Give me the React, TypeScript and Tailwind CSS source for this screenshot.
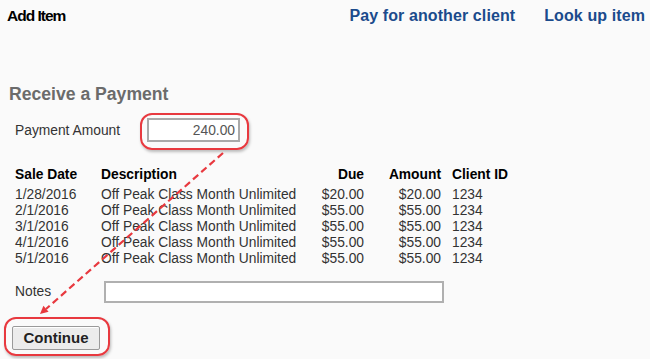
import React from "react";

type Sale = {
  date: string;
  description: string;
  due: string;
  amount: string;
  clientId: string;
};

const sales: Sale[] = [
  { date: "1/28/2016", description: "Off Peak Class Month Unlimited", due: "$20.00", amount: "$20.00", clientId: "1234" },
  { date: "2/1/2016", description: "Off Peak Class Month Unlimited", due: "$55.00", amount: "$55.00", clientId: "1234" },
  { date: "3/1/2016", description: "Off Peak Class Month Unlimited", due: "$55.00", amount: "$55.00", clientId: "1234" },
  { date: "4/1/2016", description: "Off Peak Class Month Unlimited", due: "$55.00", amount: "$55.00", clientId: "1234" },
  { date: "5/1/2016", description: "Off Peak Class Month Unlimited", due: "$55.00", amount: "$55.00", clientId: "1234" },
];

function App() {
  return (
    <div className="relative h-[359px] w-[650px] overflow-hidden bg-[#fafafa] font-['Liberation_Sans',Arial,sans-serif] text-[#333]">

      {/* top bar */}
      <div className="flex h-[32px] items-center pl-[7px] pr-[5px]">
        <div className="text-[15.5px] font-bold tracking-[-1px] text-black">
          Add Item
        </div>
        <div className="ml-auto flex gap-[29px] text-[16px] font-bold tracking-[0.1px] text-[#1b4b8c]">
          <a className="cursor-pointer">Pay for another client</a>
          <a className="cursor-pointer">Look up item</a>
        </div>
      </div>

      <h2 className="ml-[9px] mt-[52px] text-[17.6px] leading-[20px] font-bold text-[#6b6b6b]">
        Receive a Payment
      </h2>

      {/* payment amount */}
      <div className="mt-[9px] flex items-center">
        <div className="ml-[15px] w-[125px] text-[13.8px]">Payment Amount</div>
        <div className="rounded-[12px] border-2 border-[#e8393f] pb-[6px] pl-[5px] pr-[7px] pt-[3px] shadow-[1px_2px_3px_rgba(0,0,0,0.25)]">
          <input
            readOnly
            value="240.00"
            className="block h-[24px] w-[93px] border-2 border-[#a9a9a9] bg-white px-[3px] text-right text-[13.8px] text-[#555] outline-none"
          />
        </div>
      </div>

      {/* sales table */}
      <div className="mt-[17px] ml-[15px] grid grid-cols-[86px_199px_64px_77px_auto] text-[13.8px] leading-[16px]">
        <div className="pb-[4px] font-bold text-black">Sale Date</div>
        <div className="pb-[4px] font-bold text-black">Description</div>
        <div className="pb-[4px] text-right font-bold text-black">Due</div>
        <div className="pb-[4px] text-right font-bold text-black">Amount</div>
        <div className="pb-[4px] pl-[11px] font-bold text-black">Client ID</div>
        {sales.map((sale, index) => (
          <React.Fragment key={index}>
            <div>{sale.date}</div>
            <div>{sale.description}</div>
            <div className="text-right">{sale.due}</div>
            <div className="text-right">{sale.amount}</div>
            <div className="pl-[11px]">{sale.clientId}</div>
          </React.Fragment>
        ))}
      </div>

      {/* notes */}
      <div className="mt-[14px] flex items-center">
        <div className="ml-[15px] w-[89px] text-[13.8px]">Notes</div>
        <input
          readOnly
          className="block h-[22px] w-[340px] border-2 border-[#b0b0b0] bg-white outline-none"
        />
      </div>

      {/* continue */}
      <div className="mt-[14px] ml-[4px] inline-block rounded-[12px] border-2 border-[#e8393f] pb-[4px] pl-[6px] pr-[8px] pt-[7px] shadow-[1px_2px_3px_rgba(0,0,0,0.25)]">
        <button className="block h-[24px] w-[88px] rounded-[2px] border border-[#9a9a9a] bg-[#ececec] text-[15px] font-bold text-[#222] shadow-[inset_0_1px_0_#fff]">
          Continue
        </button>
      </div>

      {/* dashed arrow overlay */}
      <svg
        className="pointer-events-none absolute left-0 top-0"
        width="650"
        height="359"
        viewBox="0 0 650 359"
      >
        <line
          x1="223"
          y1="153"
          x2="46"
          y2="309"
          stroke="#e8393f"
          strokeWidth="2.2"
          strokeDasharray="7 4"
        />
        <polygon points="40,314 48.6,311.7 43.4,305.7" fill="#e8393f" />
      </svg>

    </div>
  );
}

export default App;
